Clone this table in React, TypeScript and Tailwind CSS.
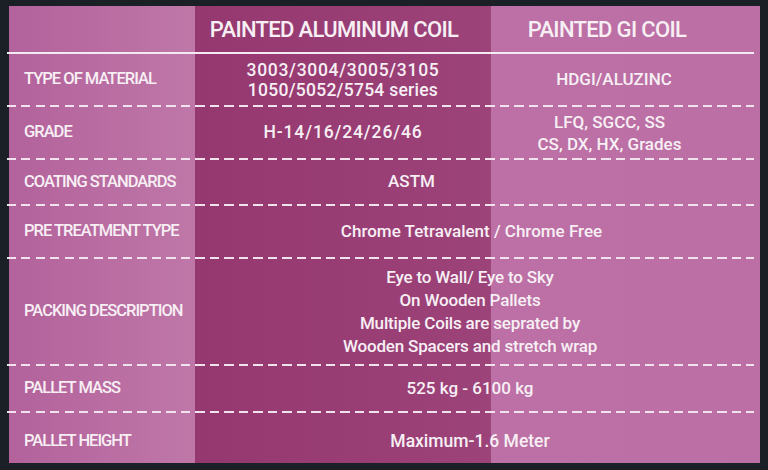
import React from 'react';

const font = { fontFamily: 'Roboto, "Liberation Sans", sans-serif' };

const Solid = () => <div className="ml-[-2px] mr-[6px] h-[2px] bg-[#f4eaf1]" />;

const Dashed = () => (
  <div className="ml-[-2px] mr-[6px] h-[2px] bg-[repeating-linear-gradient(90deg,#f1e3ed_0px,#f1e3ed_9px,transparent_9px,transparent_14.5px)]" />
);

const Label: React.FC<{ children: React.ReactNode }> = ({ children }) => (
  <div className="flex items-center pl-[15px] text-[16.5px] font-medium uppercase tracking-[-0.06em]">{children}</div>
);

export default function App() {
  return (
    <div
      className="w-[768px] h-[470px] bg-[#1b1f26] pl-[9px] pt-[6px] pr-[8px] pb-[7px] text-[#f7eff4]"
      style={font}
    >
      <div className="flex h-full flex-col bg-[linear-gradient(90deg,#b3629b_0px,#bf77a8_186px,#95386f_186px,#9c437a_482px,#bc70a5_482px,#bb6fa4_100%)]">
        {/* header */}
        <div className="grid h-[46px] grid-cols-[186px_296px_1fr]">
          <div />
          <div className="flex items-center justify-center pr-[18px] text-[22px] font-medium tracking-[-0.03em]">
            PAINTED ALUMINUM COIL
          </div>
          <div className="flex items-center justify-center pr-[37px] text-[22px] font-medium tracking-[-0.03em]">
            PAINTED GI COIL
          </div>
        </div>
        <Solid />

        <div className="grid h-[51px] grid-cols-[186px_296px_1fr]">
          <Label>Type of Material</Label>
          <div className="flex flex-col items-center justify-center text-[17.5px] font-medium leading-[20px]">
            <span className="tracking-[0.04em]">3003/3004/3005/3105</span>
            <span className="tracking-[0.015em]">1050/5052/5754 series</span>
          </div>
          <div className="flex items-center justify-center pr-[23px] text-[17px] font-medium">HDGI/ALUZINC</div>
        </div>
        <Dashed />

        <div className="grid h-[51px] grid-cols-[186px_296px_1fr]">
          <Label>Grade</Label>
          <div className="flex items-center justify-center text-[17.5px] font-medium tracking-[0.05em]">
            H-14/16/24/26/46
          </div>
          <div className="flex flex-col items-center justify-center pr-[32px] text-[17px] font-medium leading-[22px]">
            <span>LFQ, SGCC, SS</span>
            <span>CS, DX, HX, Grades</span>
          </div>
        </div>
        <Dashed />

        <div className="grid h-[44px] grid-cols-[186px_1fr]">
          <Label>Coating Standards</Label>
          <div className="flex items-center justify-center pr-[132px] text-[17px] font-medium">ASTM</div>
        </div>
        <Dashed />

        <div className="grid h-[51px] grid-cols-[186px_1fr]">
          <Label>Pre Treatment Type</Label>
          <div className="flex items-center justify-center pr-[12px] text-[17px] font-medium">
            Chrome Tetravalent / Chrome Free
          </div>
        </div>
        <Dashed />

        <div className="grid h-[105px] grid-cols-[186px_1fr]">
          <Label>Packing Description</Label>
          <div className="flex flex-col items-center justify-center pr-[15px] text-[17px] font-medium leading-[23px] tracking-[-0.01em]">
            <span>Eye to Wall/ Eye to Sky</span>
            <span>On Wooden Pallets</span>
            <span>Multiple Coils are seprated by</span>
            <span>Wooden Spacers and stretch wrap</span>
          </div>
        </div>
        <Dashed />

        <div className="grid h-[45px] grid-cols-[186px_1fr]">
          <Label>Pallet Mass</Label>
          <div className="flex items-center justify-center pr-[15px] text-[17px] font-medium">525 kg - 6100 kg</div>
        </div>
        <Dashed />

        <div className="grid flex-1 grid-cols-[186px_1fr] pt-[6px]">
          <Label>Pallet Height</Label>
          <div className="flex items-center justify-center pr-[15px] text-[17.5px] font-medium">Maximum-1.6 Meter</div>
        </div>
      </div>
    </div>
  );
}
